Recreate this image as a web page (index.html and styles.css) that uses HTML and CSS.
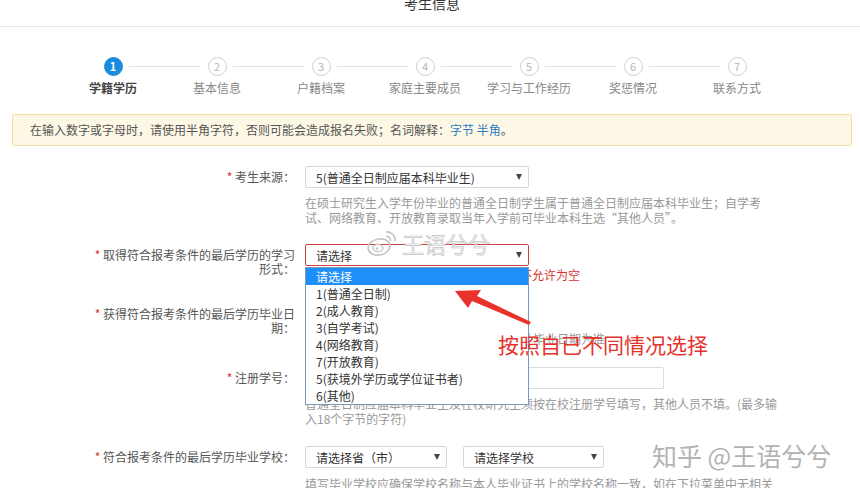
FILE: index.html
```html
<!DOCTYPE html>
<html lang="zh-CN">
<head>
	<meta charset="UTF-8">
	<title>考生信息</title>
	<link rel="stylesheet" href="styles.css">
</head>
<body>
<div class="page">
	<div class="top"><h2>考生信息</h2></div>

	<ol class="steps">
		<li class="step active"><span class="num">1</span><span class="name">学籍学历</span></li>
		<li class="step"><span class="num">2</span><span class="name">基本信息</span></li>
		<li class="step"><span class="num">3</span><span class="name">户籍档案</span></li>
		<li class="step"><span class="num">4</span><span class="name">家庭主要成员</span></li>
		<li class="step"><span class="num">5</span><span class="name">学习与工作经历</span></li>
		<li class="step"><span class="num">6</span><span class="name">奖惩情况</span></li>
		<li class="step"><span class="num">7</span><span class="name">联系方式</span></li>
	</ol>

	<div class="notice">在输入数字或字母时，请使用半角字符，否则可能会造成报名失败；名词解释：<a href="">字节</a> <a href="">半角</a>。</div>

	<div class="form">
		<div class="row r1">
			<label class="lbl"><i class="req">*</i> 考生来源：</label>
			<div class="field">
				<div class="select"><span>5(普通全日制应届本科毕业生)</span><b class="arr"></b></div>
				<p class="help">在硕士研究生入学年份毕业的普通全日制学生属于普通全日制应届本科毕业生；自学考<br>试、网络教育、开放教育录取当年入学前可毕业本科生选“其他人员”。</p>
			</div>
		</div>

		<div class="row r2">
			<label class="lbl"><i class="req">*</i> 取得符合报考条件的最后学历的学习形式：</label>
			<div class="field">
				<div class="select bad"><span>请选择</span><b class="arr"></b></div>
				<p class="err">不允许为空</p>
				<ul class="options">
					<li class="on">请选择</li>
					<li>1(普通全日制)</li>
					<li>2(成人教育)</li>
					<li>3(自学考试)</li>
					<li>4(网络教育)</li>
					<li>7(开放教育)</li>
					<li>5(获境外学历或学位证书者)</li>
					<li>6(其他)</li>
				</ul>
			</div>
		</div>

		<div class="row r3">
			<label class="lbl"><i class="req">*</i> 获得符合报考条件的最后学历毕业日期：</label>
			<div class="field">
				<div class="input short"></div>
				<p class="help">往届生按毕业证书日期填写，应届生以预计毕业日期为准</p>
			</div>
		</div>

		<div class="row r4">
			<label class="lbl"><i class="req">*</i> 注册学号：</label>
			<div class="field">
				<div class="input"></div>
				<p class="help">普通全日制应届本科毕业生及在校研究生须按在校注册学号填写，其他人员不填。(最多输<br>入18个字节的字符)</p>
			</div>
		</div>

		<div class="row r5">
			<label class="lbl"><i class="req">*</i> 符合报考条件的最后学历毕业学校：</label>
			<div class="field">
				<div class="pair">
					<div class="select prov"><span>请选择省（市）</span><b class="arr"></b></div>
					<div class="select school"><span>请选择学校</span><b class="arr"></b></div>
				</div>
				<p class="help">填写毕业学校应确保学校名称与本人毕业证书上的学校名称一致，如在下拉菜单中无相关</p>
			</div>
		</div>
	</div>

	<!-- 截图上的标注 -->
	<svg class="arrow" width="860" height="488" viewBox="0 0 860 488">
		<polygon points="455,291 481,290 477,296 531,322 529,325 472,301 468,308" fill="#e8322b"/>
	</svg>
	<div class="note">按照自已不同情况选择</div>

	<div class="wm-weibo">
		<svg width="32" height="30" viewBox="0 0 32 30">
			<ellipse cx="13" cy="19" rx="11" ry="8" fill="none" stroke="#c4c4c4" stroke-width="1.6" transform="rotate(-12 13 19)"/>
			<ellipse cx="12" cy="20" rx="5" ry="3.6" fill="none" stroke="#c4c4c4" stroke-width="1.3"/>
			<circle cx="11" cy="20.5" r="1.3" fill="#c4c4c4"/>
			<path d="M20 4 a8 8 0 0 1 9 9" fill="none" stroke="#c4c4c4" stroke-width="1.6"/>
			<path d="M20 8.5 a4 4 0 0 1 4.5 4.5" fill="none" stroke="#c4c4c4" stroke-width="1.5"/>
		</svg>
		<span>王语兮兮</span>
	</div>
	<div class="wm-zhihu">知乎 @王语兮兮</div>
</div>
</body>
</html>
```

FILE: styles.css
```css
body{margin:0;font-family:"Noto Sans CJK SC","Microsoft YaHei",sans-serif;font-size:12px;color:#555;background:#fff;}
*{box-sizing:border-box;}
a{text-decoration:none;color:#2a7cc1;}
p{margin:0;}

.page{position:relative;width:860px;height:488px;overflow:hidden;}

.top{display:flow-root;height:27px;border-bottom:1px solid #e6e6e6;}
.top h2{margin:-4px 0 0;padding-left:4px;font-size:14px;line-height:14px;font-weight:normal;text-align:center;color:#333;}

.steps{list-style:none;margin:30px 0 0;padding:0 0 0 61px;display:flex;}
.step{position:relative;width:104px;display:flex;flex-direction:column;align-items:center;}
.step + .step::before{content:"";position:absolute;top:9px;left:-36px;width:72px;height:1px;background:#e2e2e2;}
.step .num{width:19px;height:19px;border:1px solid #cfcfcf;border-radius:50%;font-size:11px;line-height:17px;text-align:center;color:#b5b5b5;}
.step .name{margin-top:5px;line-height:14px;color:#888;}
.step.active .num{background:#1a8ce0;border-color:#1a8ce0;color:#fff;font-weight:bold;}
.step.active .name{color:#444;font-weight:bold;}

.notice{margin:19px 8px 0 12px;height:32px;line-height:30px;border:1px solid #f2dfa6;border-radius:2px;background:#fdf8e5;padding-left:17px;color:#555;}

.form{margin-top:20px;}
.row{display:flex;gap:10px;padding-left:85px;}
.lbl{flex:none;width:210px;padding-top:4px;line-height:14px;text-align:right;color:#555;}
.req{font-style:normal;color:#d2392f;}
.field{position:relative;}

.select{display:flex;align-items:center;justify-content:space-between;width:224px;height:22px;padding:0 6px 0 10px;border:1px solid #d6d6d6;border-radius:2px;color:#333;background:#fff;}
.select.bad{border-color:#c9443c;}
.arr{width:0;height:0;border-left:3px solid transparent;border-right:3px solid transparent;border-top:6px solid #444;}
.input{width:359px;height:22px;border:1px solid #dcdcdc;border-radius:2px;}
.input.short{width:200px;}

.help{margin-top:7px;line-height:15px;color:#999;}
.err{margin:2px 0 0 215px;line-height:14px;color:#d6352c;}

.options{position:absolute;top:23px;left:0;z-index:2;width:224px;margin:0;padding:0;list-style:none;border:1px solid #7b98b8;background:#fff;}
.options li{height:17px;line-height:17px;padding-left:10px;color:#333;}
.options li.on{background:#1e8ff9;color:#fff;}

.r1{margin-bottom:19px;}
.r2{margin-bottom:21px;}
.r3 .help{margin-top:6px;}
.r3{margin-bottom:21px;}
.r4{margin-bottom:20px;}
.r5 .help{margin-top:8px;}
.pair{display:flex;gap:16px;}
.select.prov{width:142px;}
.select.school{width:141px;}

.arrow{position:absolute;top:0;left:0;z-index:3;pointer-events:none;}
.note{position:absolute;left:498px;top:331px;z-index:3;font-size:21px;line-height:26px;color:#e5332b;}

.wm-weibo{position:absolute;left:366px;top:228px;z-index:3;display:flex;align-items:center;gap:4px;}
.wm-weibo span{font-size:22px;line-height:28px;color:#f4f4f4;-webkit-text-stroke:0.7px #c6c6c6;}
.wm-zhihu{position:absolute;left:652px;top:439px;z-index:3;font-size:25px;line-height:32px;color:#b3b3b3;text-shadow:0 0 2px #fff;}
```
